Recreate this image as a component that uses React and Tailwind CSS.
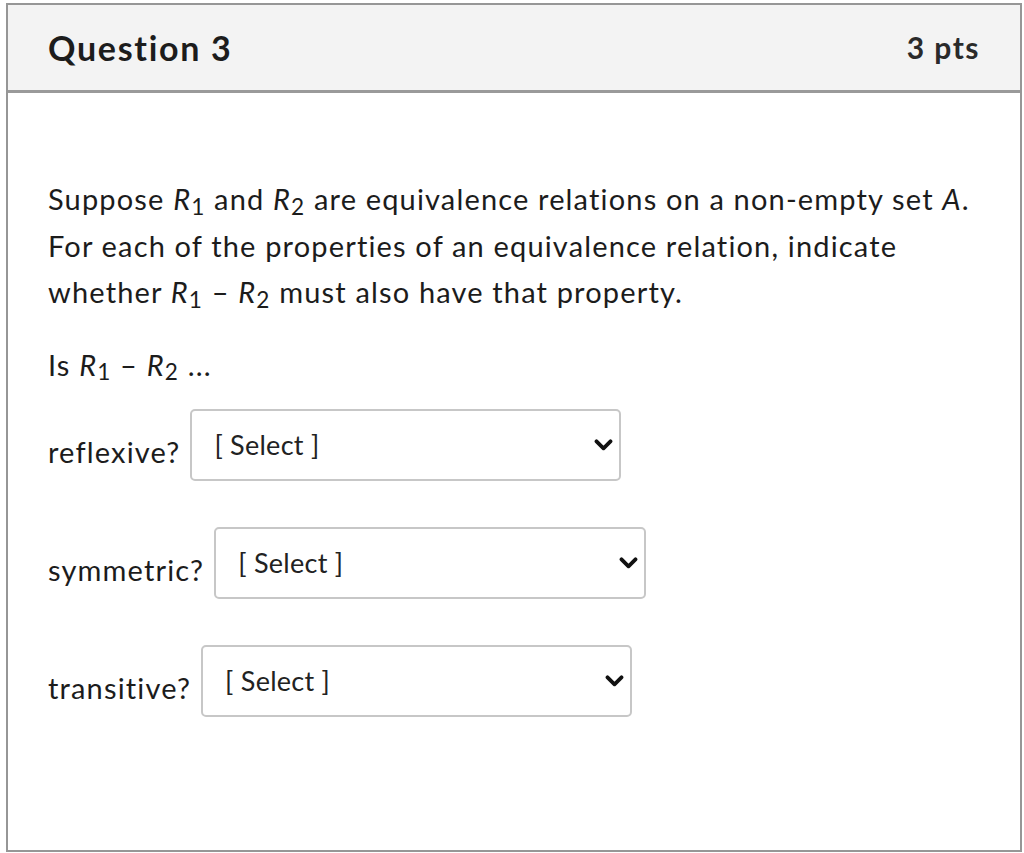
import React from 'react';

const R = ({ n }) => (
  <span className="whitespace-nowrap">
    <i>R</i>
    <span className="text-[0.78em] leading-none relative top-[0.22em]">{n}</span>
  </span>
);

const Chevron = () => (
  <svg width="19" height="13" viewBox="0 0 19 13" className="shrink-0">
    <path d="M2.5 2.8 L9.5 9.8 L16.5 2.8" fill="none" stroke="#111" strokeWidth="3.8" strokeLinecap="round" strokeLinejoin="round" />
  </svg>
);

const SelectRow = ({ label, width }) => (
  <div className="flex items-center gap-[10px]">
    <span className="pt-[14px]">{label}</span>
    <div className="relative">
      <select
        className="appearance-none h-[72px] rounded-[5px] border-2 border-[#c7c7c7] bg-white pl-[22px] pr-12 text-[27px] tracking-[0.01em] text-[#222] outline-none"
        style={{ width }}
        defaultValue=""
      >
        <option value="">[ Select ]</option>
        <option value="yes">Yes</option>
        <option value="no">No</option>
      </select>
      <div className="pointer-events-none absolute right-[8px] top-1/2 -translate-y-1/2">
        <Chevron />
      </div>
    </div>
  </div>
);

export default function App() {
  return (
    <div className="min-h-screen bg-white pt-[3px] pl-[6px] pr-[2px] pb-[1px]" style={{ fontFamily: 'Lato, "Noto Sans", sans-serif' }}>
      <div className="h-[849px] border-2 border-[#969696] flex flex-col text-[#1c1c1c]">
        <div className="h-[88px] shrink-0 bg-[#f3f3f3] border-b-[3px] border-[#9a9a9a] flex items-center justify-between pl-[40px] pr-[40px]">
          <h2 className="text-[34px] font-bold tracking-[0.05em]">Question 3</h2>
          <span className="text-[30px] font-bold tracking-[0.05em] text-[#2a2a2a]">3 pts</span>
        </div>
        <div className="pl-[40px] pr-4 pt-[83px] text-[29px] tracking-[0.04em] leading-[46.5px]">
          <p>
            Suppose <R n="1" /> and <R n="2" /> are equivalence relations on a non-empty set <i>A</i>.
            <br />
            For each of the properties of an equivalence relation, indicate
            <br />
            whether <R n="1" /> – <R n="2" /> must also have that property.
          </p>
          <p className="mt-[26px]">
            Is <R n="1" /> – <R n="2" /> ...
          </p>
          <div className="mt-[21px] flex flex-col gap-[46px]">
            <SelectRow label="reflexive?" width="431px" />
            <SelectRow label="symmetric?" width="432px" />
            <SelectRow label="transitive?" width="431px" />
          </div>
        </div>
      </div>
    </div>
  );
}
